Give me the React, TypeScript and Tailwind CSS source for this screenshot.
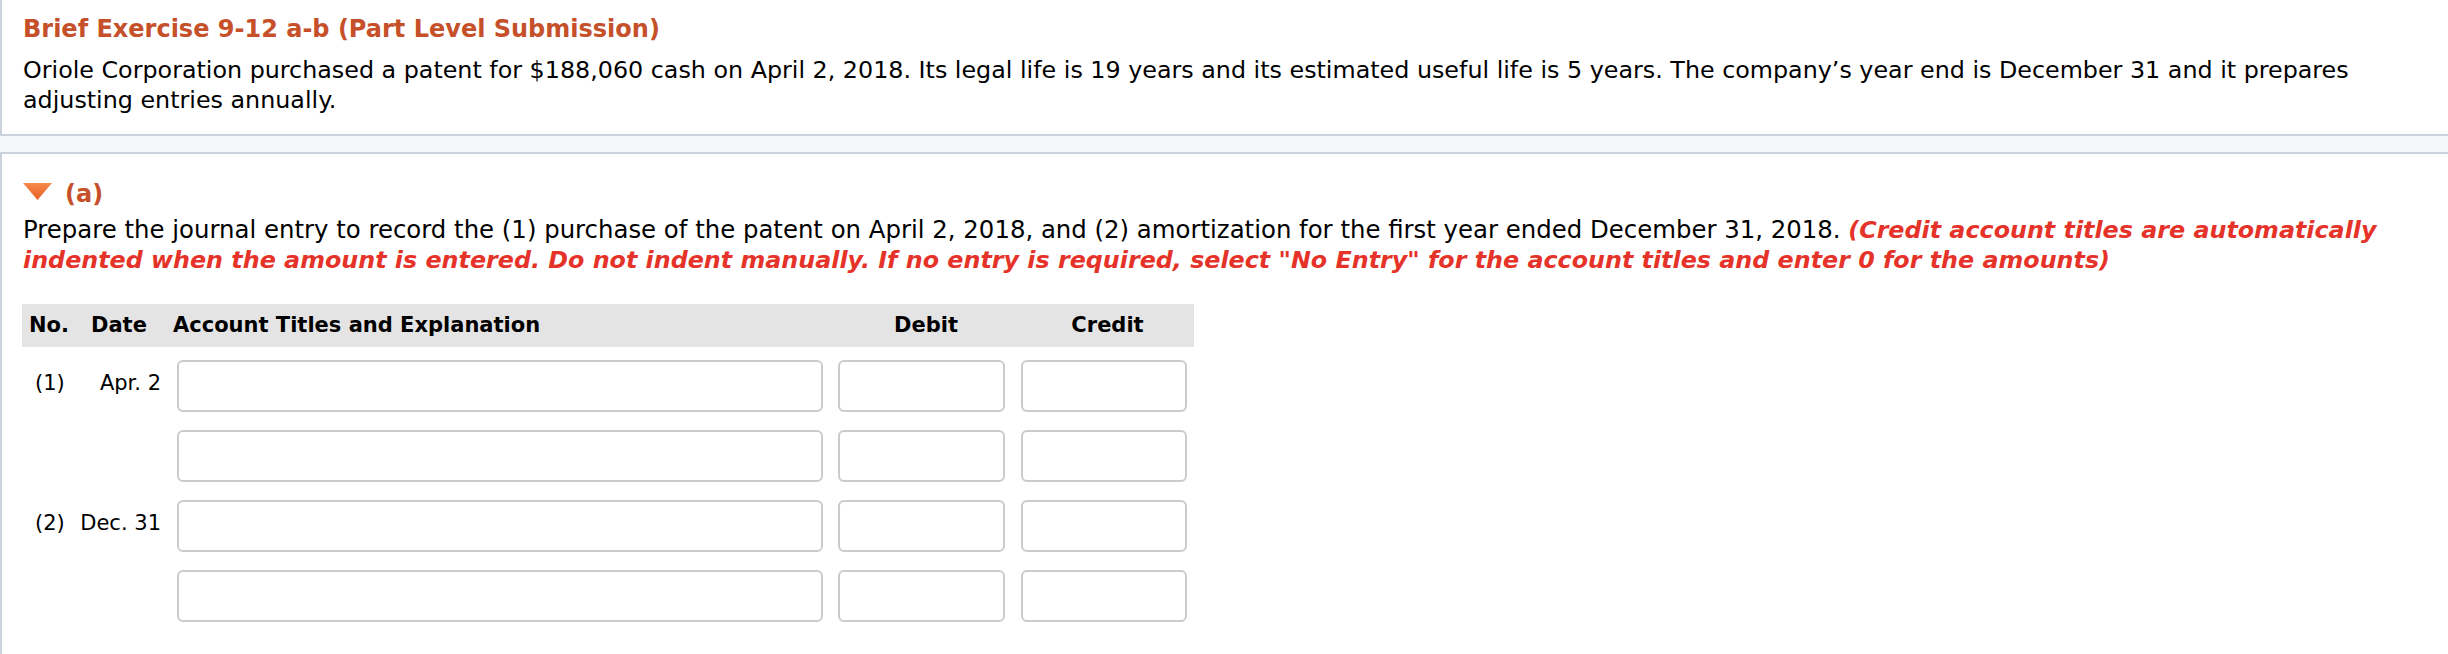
import React from "react";

const font = { fontFamily: '"DejaVu Sans", Verdana, sans-serif' };

function Triangle() {
  return (
    <svg width="29" height="17" viewBox="0 0 29 17" className="mt-[4px] shrink-0">
      <defs>
        <linearGradient id="tri" x1="0" y1="0" x2="0" y2="1">
          <stop offset="0" stopColor="#f7894a" />
          <stop offset="1" stopColor="#e85f25" />
        </linearGradient>
      </defs>
      <polygon points="0,0 29,0 14.5,17" fill="url(#tri)" />
    </svg>
  );
}

function Field({ className }: { className: string }) {
  return <div className={`h-[52px] rounded-[6px] border-2 border-[#cbcbcb] bg-white ${className}`} />;
}

function EntryRow({ no, date }: { no: string; date: string }) {
  return (
    <div className="flex h-[52px]">
      <div className="w-[56px] whitespace-nowrap pl-[13px] text-[21px] leading-[46px] text-black">{no}</div>
      <div className="w-[88px] whitespace-nowrap pr-[5px] text-right text-[21px] leading-[46px] text-black">{date}</div>
      <div className="w-[664px] pl-[11px]">
        <Field className="w-[646px]" />
      </div>
      <div className="w-[184px] pl-[8px]">
        <Field className="w-[167px]" />
      </div>
      <div className="w-[180px] pl-[7px]">
        <Field className="w-[166px]" />
      </div>
    </div>
  );
}

export default function App() {
  return (
    <div className="h-[654px] w-[2448px] overflow-hidden bg-[#f5f7f9]" style={font}>
      <div className="border-b-2 border-l-2 border-[#cdd3dc] bg-white pb-[19px] pl-[21px] pr-[20px] pt-[14px]">
        <h1 className="text-[24px] font-bold leading-[30px] text-[#c5502a]">
          Brief Exercise 9-12 a-b (Part Level Submission)
        </h1>
        <p className="mt-[11px] text-[23.8px] leading-[30px] text-black">
          Oriole Corporation purchased a patent for $188,060 cash on April 2, 2018. Its legal life is 19 years and its
          estimated useful life is 5 years. The company’s year end is December 31 and it prepares adjusting entries
          annually.
        </p>
      </div>

      <div className="mt-[16px] h-[600px] border-l-2 border-t-2 border-[#cdd3dc] bg-white pl-[20px] pr-[20px] pt-[25px]">
        <div className="flex items-start gap-[13px] pl-[1px]">
          <Triangle />
          <span className="text-[24px] font-bold leading-[30px] text-[#c5502a]">(a)</span>
        </div>
        <p className="mt-[6px] pl-[1px] text-[24.4px] leading-[30px] text-black">
          Prepare the journal entry to record the (1) purchase of the patent on April 2, 2018, and (2) amortization
          for the first year ended December 31, 2018.{" "}
          <span className="text-[23.8px] font-bold italic text-[#e63329]">
            (Credit account titles are automatically indented when the amount is entered. Do not indent manually. If
            no entry is required, select "No Entry" for the account titles and enter 0 for the amounts)
          </span>
        </p>

        <div className="mt-[29px] w-[1172px]">
          <div className="flex h-[43px] bg-[#e4e4e4] text-[21px] font-bold leading-[43px] text-black">
            <div className="w-[56px] pl-[7px]">No.</div>
            <div className="w-[88px] pl-[13px]">Date</div>
            <div className="w-[664px] pl-[7px]">Account Titles and Explanation</div>
            <div className="w-[184px] pl-[8px] text-center">Debit</div>
            <div className="w-[180px] pl-[7px] text-center">Credit</div>
          </div>
          <div className="mt-[13px] flex flex-col gap-[18px]">
            <EntryRow no="(1)" date="Apr. 2" />
            <EntryRow no="" date="" />
            <EntryRow no="(2)" date="Dec. 31" />
            <EntryRow no="" date="" />
          </div>
        </div>
      </div>
    </div>
  );
}
